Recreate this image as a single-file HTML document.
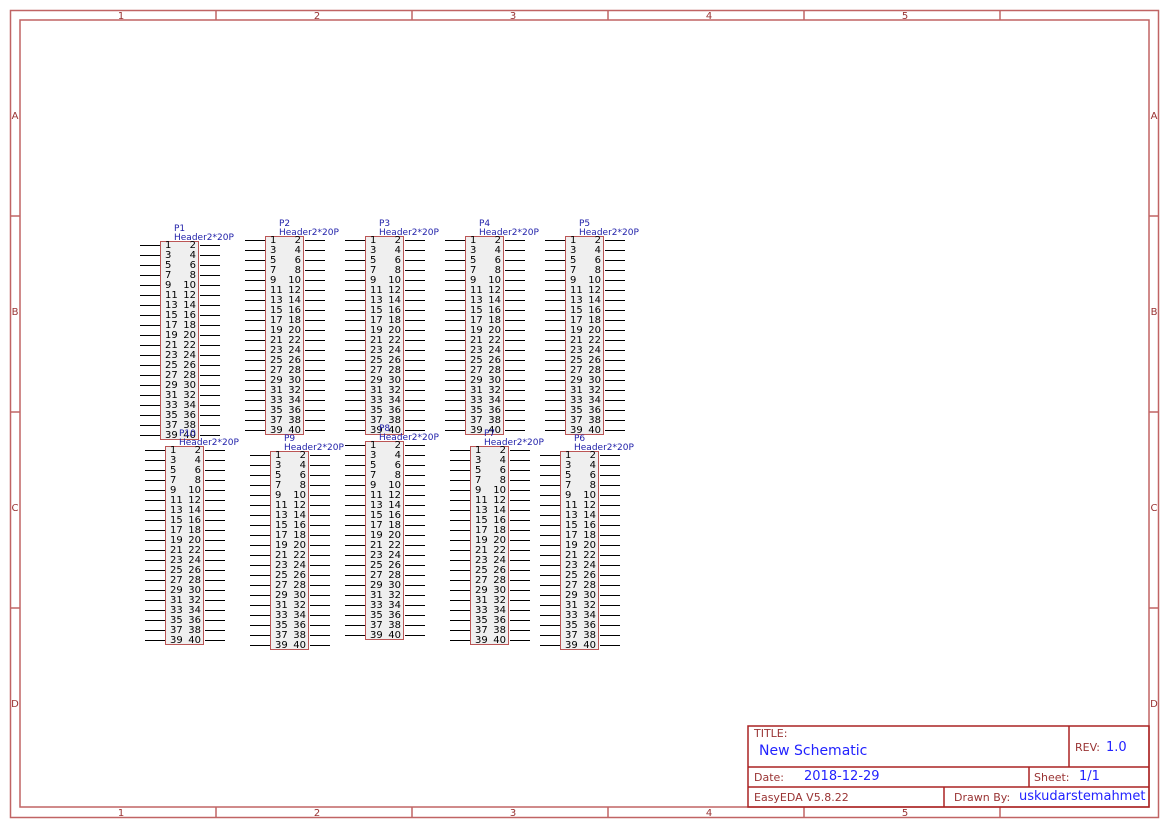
<!DOCTYPE html>
<html><head><meta charset="utf-8"><style>
html,body{margin:0;padding:0;background:#fff;}
body{width:1169px;height:827px;position:relative;overflow:hidden;font-family:"DejaVu Sans","Liberation Sans",sans-serif;}
.a{position:absolute;}
.h{position:absolute;width:40px;height:200px;}
.h .b{position:absolute;left:0;top:0;width:37px;height:197px;border:1.5px solid #b55;background:#efefef;}
.h .pl,.h .pr{position:absolute;top:0;width:20px;height:200px;background:repeating-linear-gradient(to bottom,transparent 0,transparent 4px,#000 4px,#000 5px,transparent 5px,transparent 10px);}
.h .pl{left:-20px}.h .pr{left:40px}
.h .l,.h .r{position:absolute;top:0;font-size:10px;line-height:10px;color:#000;}
.h .l{left:5px}.h .r{right:4px;text-align:right}
.h .n{position:absolute;left:14px;top:-16px;font-size:9px;line-height:9px;color:#22a;white-space:nowrap;}
.t{position:absolute;color:#933;font-size:11px;}
.v{position:absolute;color:#22f;}
</style></head><body>
<svg class="a" style="left:0;top:0" width="1169" height="827">
<g stroke="#c06464" stroke-width="1.5" fill="none">
<rect x="10.5" y="10.5" width="1148" height="807"/>
<rect x="20" y="20" width="1129" height="787"/>
<line x1="216" y1="10" x2="216" y2="20"/><line x1="412" y1="10" x2="412" y2="20"/><line x1="608" y1="10" x2="608" y2="20"/><line x1="804" y1="10" x2="804" y2="20"/><line x1="1000" y1="10" x2="1000" y2="20"/>
<line x1="216" y1="807" x2="216" y2="817"/><line x1="412" y1="807" x2="412" y2="817"/><line x1="608" y1="807" x2="608" y2="817"/><line x1="804" y1="807" x2="804" y2="817"/><line x1="1000" y1="807" x2="1000" y2="817"/>
<line x1="10" y1="216" x2="20" y2="216"/><line x1="10" y1="412" x2="20" y2="412"/><line x1="10" y1="608" x2="20" y2="608"/>
<line x1="1149" y1="216" x2="1158" y2="216"/><line x1="1149" y1="412" x2="1158" y2="412"/><line x1="1149" y1="608" x2="1158" y2="608"/>
</g>
<g stroke="#a22" stroke-width="1.5" fill="none">
<rect x="748" y="726" width="401" height="81"/>
<line x1="748" y1="767" x2="1149" y2="767"/><line x1="748" y1="787" x2="1149" y2="787"/>
<line x1="1069" y1="726" x2="1069" y2="767"/><line x1="1029" y1="767" x2="1029" y2="787"/><line x1="944" y1="787" x2="944" y2="807"/>
</g>
<g fill="#933" font-size="10" font-family="DejaVu Sans,sans-serif" text-anchor="middle">
<text x="121" y="19">1</text><text x="317" y="19">2</text><text x="513" y="19">3</text><text x="709" y="19">4</text><text x="905" y="19">5</text>
<text x="121" y="816">1</text><text x="317" y="816">2</text><text x="513" y="816">3</text><text x="709" y="816">4</text><text x="905" y="816">5</text>
<text x="15" y="119">A</text><text x="15" y="315">B</text><text x="15" y="511">C</text><text x="15" y="707">D</text>
<text x="1154" y="119">A</text><text x="1154" y="315">B</text><text x="1154" y="511">C</text><text x="1154" y="707">D</text>
</g>
</svg>

<div class="h" style="left:160px;top:241px"><div class="pl"></div><div class="pr"></div><div class="b"></div><div class="l">1<br>3<br>5<br>7<br>9<br>11<br>13<br>15<br>17<br>19<br>21<br>23<br>25<br>27<br>29<br>31<br>33<br>35<br>37<br>39</div><div class="r">2<br>4<br>6<br>8<br>10<br>12<br>14<br>16<br>18<br>20<br>22<br>24<br>26<br>28<br>30<br>32<br>34<br>36<br>38<br>40</div><div class="n">P1<br>Header2*20P</div></div>
<div class="h" style="left:265px;top:236px"><div class="pl"></div><div class="pr"></div><div class="b"></div><div class="l">1<br>3<br>5<br>7<br>9<br>11<br>13<br>15<br>17<br>19<br>21<br>23<br>25<br>27<br>29<br>31<br>33<br>35<br>37<br>39</div><div class="r">2<br>4<br>6<br>8<br>10<br>12<br>14<br>16<br>18<br>20<br>22<br>24<br>26<br>28<br>30<br>32<br>34<br>36<br>38<br>40</div><div class="n">P2<br>Header2*20P</div></div>
<div class="h" style="left:365px;top:236px"><div class="pl"></div><div class="pr"></div><div class="b"></div><div class="l">1<br>3<br>5<br>7<br>9<br>11<br>13<br>15<br>17<br>19<br>21<br>23<br>25<br>27<br>29<br>31<br>33<br>35<br>37<br>39</div><div class="r">2<br>4<br>6<br>8<br>10<br>12<br>14<br>16<br>18<br>20<br>22<br>24<br>26<br>28<br>30<br>32<br>34<br>36<br>38<br>40</div><div class="n">P3<br>Header2*20P</div></div>
<div class="h" style="left:465px;top:236px"><div class="pl"></div><div class="pr"></div><div class="b"></div><div class="l">1<br>3<br>5<br>7<br>9<br>11<br>13<br>15<br>17<br>19<br>21<br>23<br>25<br>27<br>29<br>31<br>33<br>35<br>37<br>39</div><div class="r">2<br>4<br>6<br>8<br>10<br>12<br>14<br>16<br>18<br>20<br>22<br>24<br>26<br>28<br>30<br>32<br>34<br>36<br>38<br>40</div><div class="n">P4<br>Header2*20P</div></div>
<div class="h" style="left:565px;top:236px"><div class="pl"></div><div class="pr"></div><div class="b"></div><div class="l">1<br>3<br>5<br>7<br>9<br>11<br>13<br>15<br>17<br>19<br>21<br>23<br>25<br>27<br>29<br>31<br>33<br>35<br>37<br>39</div><div class="r">2<br>4<br>6<br>8<br>10<br>12<br>14<br>16<br>18<br>20<br>22<br>24<br>26<br>28<br>30<br>32<br>34<br>36<br>38<br>40</div><div class="n">P5<br>Header2*20P</div></div>
<div class="h" style="left:165px;top:446px"><div class="pl"></div><div class="pr"></div><div class="b"></div><div class="l">1<br>3<br>5<br>7<br>9<br>11<br>13<br>15<br>17<br>19<br>21<br>23<br>25<br>27<br>29<br>31<br>33<br>35<br>37<br>39</div><div class="r">2<br>4<br>6<br>8<br>10<br>12<br>14<br>16<br>18<br>20<br>22<br>24<br>26<br>28<br>30<br>32<br>34<br>36<br>38<br>40</div><div class="n">P10<br>Header2*20P</div></div>
<div class="h" style="left:270px;top:451px"><div class="pl"></div><div class="pr"></div><div class="b"></div><div class="l">1<br>3<br>5<br>7<br>9<br>11<br>13<br>15<br>17<br>19<br>21<br>23<br>25<br>27<br>29<br>31<br>33<br>35<br>37<br>39</div><div class="r">2<br>4<br>6<br>8<br>10<br>12<br>14<br>16<br>18<br>20<br>22<br>24<br>26<br>28<br>30<br>32<br>34<br>36<br>38<br>40</div><div class="n">P9<br>Header2*20P</div></div>
<div class="h" style="left:365px;top:441px"><div class="pl"></div><div class="pr"></div><div class="b"></div><div class="l">1<br>3<br>5<br>7<br>9<br>11<br>13<br>15<br>17<br>19<br>21<br>23<br>25<br>27<br>29<br>31<br>33<br>35<br>37<br>39</div><div class="r">2<br>4<br>6<br>8<br>10<br>12<br>14<br>16<br>18<br>20<br>22<br>24<br>26<br>28<br>30<br>32<br>34<br>36<br>38<br>40</div><div class="n">P8<br>Header2*20P</div></div>
<div class="h" style="left:470px;top:446px"><div class="pl"></div><div class="pr"></div><div class="b"></div><div class="l">1<br>3<br>5<br>7<br>9<br>11<br>13<br>15<br>17<br>19<br>21<br>23<br>25<br>27<br>29<br>31<br>33<br>35<br>37<br>39</div><div class="r">2<br>4<br>6<br>8<br>10<br>12<br>14<br>16<br>18<br>20<br>22<br>24<br>26<br>28<br>30<br>32<br>34<br>36<br>38<br>40</div><div class="n">P7<br>Header2*20P</div></div>
<div class="h" style="left:560px;top:451px"><div class="pl"></div><div class="pr"></div><div class="b"></div><div class="l">1<br>3<br>5<br>7<br>9<br>11<br>13<br>15<br>17<br>19<br>21<br>23<br>25<br>27<br>29<br>31<br>33<br>35<br>37<br>39</div><div class="r">2<br>4<br>6<br>8<br>10<br>12<br>14<br>16<br>18<br>20<br>22<br>24<br>26<br>28<br>30<br>32<br>34<br>36<br>38<br>40</div><div class="n">P6<br>Header2*20P</div></div>

<div class="t" style="left:754px;top:727px;font-size:11px">TITLE:</div>
<div class="v" style="left:759px;top:743px;font-size:14px">New Schematic</div>
<div class="t" style="left:1075px;top:741px">REV:</div>
<div class="v" style="left:1106px;top:740px;font-size:13px">1.0</div>
<div class="t" style="left:754px;top:771px">Date:</div>
<div class="v" style="left:804px;top:769px;font-size:13px">2018-12-29</div>
<div class="t" style="left:1034px;top:771px">Sheet:</div>
<div class="v" style="left:1079px;top:769px;font-size:13px">1/1</div>
<div class="t" style="left:754px;top:791px">EasyEDA V5.8.22</div>
<div class="t" style="left:954px;top:791px">Drawn By:</div>
<div class="v" style="left:1019px;top:789px;font-size:13px">uskudarstemahmet</div>
</body></html>
